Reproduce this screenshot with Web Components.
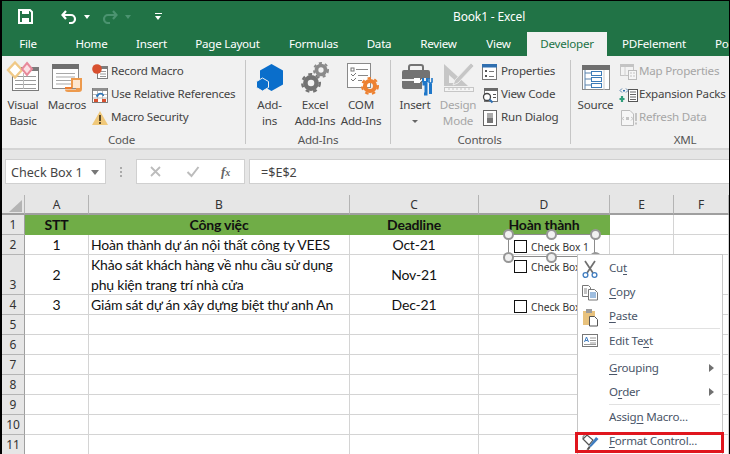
<!DOCTYPE html>
<html lang="vi">
<head>
<meta charset="utf-8">
<title>Book1 - Excel</title>
<style>
html,body{margin:0;padding:0;background:#000}
body{font-family:"Noto Sans","Open Sans",sans-serif}
</style>
</head>
<body>
<x-app>
  <x-titlebar title-text="Book1 - Excel"></x-titlebar>
  <x-tabs></x-tabs>
  <x-ribbon>
    <x-group label="Code" style="width:244px" label-shift="-2">
      <x-big icon="vb" style="width:42px">Visual<br>Basic</x-big>
      <x-big icon="macros" style="width:46px">Macros</x-big>
      <x-col style="margin-left:2px">
        <x-small icon="record">Record Macro</x-small>
        <x-small icon="relative">Use Relative References</x-small>
        <x-small icon="security">Macro Security</x-small>
      </x-col>
    </x-group>
    <x-group label="Add-Ins" style="width:145px">
      <x-big icon="addins" style="width:47px">Add-<br>ins</x-big>
      <x-big icon="exceladd" style="width:44px">Excel<br>Add-Ins</x-big>
      <x-big icon="comadd" style="width:48px">COM<br>Add-Ins</x-big>
    </x-group>
    <x-group label="Controls" style="width:180px" label-shift="-1">
      <x-big icon="insert" style="width:48px">Insert<br><x-caret></x-caret></x-big>
      <x-big icon="design" style="width:38px" disabled>Design<br>Mode</x-big>
      <x-col style="margin-left:5px">
        <x-small icon="properties">Properties</x-small>
        <x-small icon="viewcode">View Code</x-small>
        <x-small icon="rundialog">Run Dialog</x-small>
      </x-col>
    </x-group>
    <x-group label="XML" style="width:158px;border:0" label-shift="35">
      <x-big icon="source" style="width:49px">Source</x-big>
      <x-col>
        <x-small icon="mapprops" disabled>Map Properties</x-small>
        <x-small icon="expansion">Expansion Packs</x-small>
        <x-small icon="refresh" disabled>Refresh Data</x-small>
      </x-col>
    </x-group>
  </x-ribbon>
  <x-formula name="Check Box 1" value="=$E$2"></x-formula>
  <x-sheet></x-sheet>
  <x-objects></x-objects>
  <x-menu></x-menu>
</x-app>

<script>
const gear=(cx,cy,r,c)=>{const t=Math.PI*2*r*0.98/16;return `<circle cx="${cx}" cy="${cy}" r="${r*0.88}" fill="none" stroke="${c}" stroke-width="${r*0.24}" stroke-dasharray="${t} ${t}"/><circle cx="${cx}" cy="${cy}" r="${r*0.56}" fill="none" stroke="${c}" stroke-width="${r*0.46}"/>`};
const lines=(x,y,w,n,step,c)=>{let s='';for(let i=0;i<n;i++)s+=`<rect x="${x}" y="${y+i*step}" width="${w}" height="1" fill="${c}"/>`;return s};
const ICONS={
 vb:`<rect x="9.5" y="5.5" width="26" height="23" fill="#fff" stroke="#7b7b7b"/><rect x="9" y="5" width="27" height="4" fill="#7b7b7b"/>
  ${lines(12,14,21,4,4,'#9a9a9a')}<rect x="20" y="11" width="1" height="16" fill="#bbb"/>
  <path d="M12 .5l7 7.5-7 7.5L5 8z" fill="#fff" stroke="#f0c987" stroke-width="2.4"/><path d="M24 1l5 6-5 6-5-6z" fill="#fbe0e5" stroke="#e8899b" stroke-width="2"/>`,
 macros:`<rect x="5.5" y="2.5" width="26" height="24" fill="#fff" stroke="#8a8a8a"/><rect x="5" y="2" width="27" height="5" fill="#6f6f6f"/>
  ${lines(9,11,19,4,3.5,'#a8a8a8')}<path d="M24 16h11v11q0 3-3 3H21q-3 0-3-2.5h11V26h-5z" fill="#ed9a4d"/><path d="M26 18h7v8h-7z" fill="#fde7cf"/><path d="M18 25h7v2h-7z" fill="#ed7d31"/>`,
 record:`<rect x="5.5" y="2.5" width="10" height="12" fill="#fff" stroke="#7d7d7d"/><rect x="5" y="2" width="11" height="3" fill="#7d7d7d"/>${lines(8,7,6,3,2.5,'#999')}<circle cx="5" cy="5" r="4.8" fill="#d8502f"/>`,
 relative:`<rect x=".5" y="1.5" width="15" height="14" fill="#fff" stroke="#7d7d7d"/><rect x="1" y="1" width="14" height="3" fill="#8f8f8f"/>${lines(1,7,14,2,3.5,'#bbb')}<rect x="5" y="4" width="1" height="11" fill="#bbb"/><rect x="10" y="4" width="1" height="11" fill="#bbb"/><rect x="2" y="12" width="4" height="3" fill="#d8502f"/><rect x="10" y="12" width="4" height="3" fill="#d8502f"/><path d="M5 9.5q1-3 3.5-3t3 2.5" fill="none" stroke="#2f76b9" stroke-width="1.4"/><path d="M3.6 7.6l1.4 3 2.2-2z" fill="#2f76b9"/>`,
 security:`<path d="M8 1l8 14H0z" fill="#f0c879"/><rect x="7" y="5" width="2" height="6" fill="#5b4a2a"/><rect x="7" y="12" width="2" height="2" fill="#5b4a2a"/>`,
 addins:`<path d="M21.5 2L33 8.5v14L21.5 29 10 22.5v-14z" fill="#0a6ecb"/><path d="M12.5 16l6 3.5v6l-6 3.5-6-3.5v-6z" fill="#0a6ecb" stroke="#f1f1f1"/>`,
 exceladd:`${gear(16,21,10,'#737373')}${gear(26,8,8,'#8a8a8a')}`,
 comadd:`<rect x="6.5" y="1.5" width="23" height="24" fill="#fff" stroke="#8a8a8a"/><rect x="10" y="6" width="3" height="3" fill="none" stroke="#777"/><rect x="15" y="7" width="12" height="1" fill="#888"/><path d="M10 12l2 2 3-3M10 17l2 2 3-3" fill="none" stroke="#777"/><rect x="17" y="13" width="10" height="1" fill="#888"/><rect x="17" y="18" width="4" height="1" fill="#888"/>${gear(29,24,9,'#ed8131')}`,
 insert:`<path d="M14 8V5q0-2 2-2h10q2 0 2 2v3" fill="none" stroke="#737373" stroke-width="2"/><path d="M7 10q0-2 2-2h24q2 0 2 2v7H26v1h-7v-1H7z" fill="#737373"/><path d="M7 19h12v1h7v-1h1v8H9q-2 0-2-2z" fill="#737373"/><rect x="19" y="16" width="6" height="5" fill="#fff"/>
  <path d="M29 16v6h2v10h-2" fill="none" stroke="#1f77c9" stroke-width="3"/><path d="M34 16v4l1.5 2 1.5-2v-4" fill="none" stroke="#1f77c9" stroke-width="1.6"/><rect x="34" y="22" width="3" height="10" fill="#1f77c9"/><path d="M27 16v4l3 2 3-2v-4" fill="#1f77c9"/><rect x="29" y="16" width="2" height="3" fill="#f1f1f1"/>`,
 design:`<path d="M6 2L30 24H6z" fill="#c6c6c6"/><path d="M11 13l9 8h-9z" fill="#f1f1f1"/><path d="M33 1l3 3-16 17-5 2 2-5z" fill="#c6c6c6" stroke="#f1f1f1" stroke-width=".8"/><rect x="6.5" y="25.5" width="29" height="4" fill="#f4f4f4" stroke="#c6c6c6"/><path d="M11 26v2M15 26v2M19 26v2M23 26v2M27 26v2M31 26v2" stroke="#c6c6c6"/>`,
 source:`<rect x="6.5" y="3.5" width="27" height="24" fill="#fff" stroke="#8a8a8a"/><rect x="6" y="3" width="28" height="5" fill="#6f6f6f"/><path d="M9 8v19M9 11h6M9 17h6M9 23h6" fill="none" stroke="#5a83ad"/><g fill="#fff" stroke="#3d7cb8"><rect x="15.500" y="9.500" width="10" height="4"/><rect x="15.500" y="15.500" width="10" height="4"/><rect x="15.500" y="21.500" width="10" height="4"/></g><path d="M28 8v20" stroke="#ccc"/>`,
 properties:`<rect x=".5" y=".5" width="14" height="15" fill="#fff" stroke="#777"/><rect x="0" y="0" width="15" height="3.500" fill="#2f6fb0"/><rect x="3" y="6" width="2" height="2" fill="#555"/><rect x="3" y="11" width="2" height="2" fill="#555"/><rect x="7" y="7" width="5" height="1" fill="#777"/><rect x="7" y="12" width="5" height="1" fill="#777"/>`,
 viewcode:`<rect x="2.500" y="1.500" width="13" height="13" fill="#fff" stroke="#777"/><rect x="2" y="1" width="14" height="3" fill="#6a6a6a"/><rect x="11" y="7" width="3" height="1" fill="#555"/><rect x="11" y="10" width="3" height="1" fill="#555"/><circle cx="5" cy="10" r="3.500" fill="#fff" stroke="#444" stroke-width="1.300"/><path d="M7.500 12.500l3 3" stroke="#2f6fb0" stroke-width="2"/>`,
 rundialog:`<rect x="1.500" y=".5" width="13" height="15" fill="#fff" stroke="#666"/><rect x="5" y="3" width="6" height="5" fill="#aaa"/><rect x="5" y="8" width="6" height="5" fill="#777"/>`,
 mapprops:`<rect x=".5" y=".5" width="13" height="11" fill="#f3f3f3" stroke="#c4c4c4"/><rect x="0" y="0" width="14" height="3" fill="#c4c4c4"/><path d="M5 3v9" stroke="#d0d0d0"/><rect x="8.500" y="6.500" width="8" height="9" fill="#f6f6f6" stroke="#bcbcbc"/><path d="M10 9h2M10 12h2M13 9h2M13 12h2" stroke="#c4c4c4"/>`,
 expansion:`<rect x="8.500" y="2.500" width="9" height="12" fill="#fff" stroke="#555"/><path d="M10 5h6M10 7.500h6M10 10h6M10 12.500h6" stroke="#666"/><path d="M2 1.500l-2 2 2 2" fill="none" stroke="#5a83ad"/><path d="M6 1.500l2 2-2 2" fill="none" stroke="#5a83ad"/><rect x="3" y="3" width="2" height="1.500" fill="#2f6fb0"/><path d="M2 9v6M-.5 12h5" stroke="#2f9d7a" stroke-width="2.200"/>`,
 refresh:`<path d="M1.500 .5H10l3.500 3.500v11.500H1.500z" fill="#f6f6f6" stroke="#bcbcbc"/><path d="M4 7l-2 1.500L4 10M11 7l2 1.500-2 2" fill="none" stroke="#c4c4c4"/><rect x="6" y="7" width="3" height="3" fill="#c4c4c4"/><rect x="15" y="3" width="2" height="8" fill="#c4c4c4"/><rect x="15" y="12.500" width="2" height="2" fill="#c4c4c4"/>`,
 cut:`<path d="M3 1l8 12M13 1L5 13" stroke="#6f6f6f" stroke-width="1.700" fill="none"/><circle cx="3.500" cy="15" r="2.400" fill="#fff" stroke="#3f7cbf" stroke-width="1.300"/><circle cx="12.500" cy="15" r="2.400" fill="#fff" stroke="#3f7cbf" stroke-width="1.300"/>`,
 copy:`<path d="M.5 1.500h6l2 2v9H.5z" fill="#fff" stroke="#777"/><path d="M6.500 5.500h6l3 3v7.500h-9z" fill="#fff" stroke="#777"/><path d="M2 5h3M2 7h3M2 9h3" stroke="#888"/><path d="M8 9h6M8 11h6M8 13h6" stroke="#3f7cbf"/>`,
 paste:`<rect x="1" y="3" width="12" height="14" fill="#e8c27d"/><rect x="4" y="1" width="6" height="4" fill="#9b9b9b"/><path d="M7.500 8.500h5l3 3v6.500h-8z" fill="#fff" stroke="#555"/>`,
 edittext:`<rect x=".5" y="1.500" width="15" height="12" fill="#fff" stroke="#777"/><path d="M2.500 9l2-5 2 5M3.200 7.500h2.600" fill="none" stroke="#3f7cbf"/><path d="M8 5h6M8 7.500h6M8 10h6M2 11.500h12" stroke="#999"/>`,
 format:`<path d="M1 6l4-4 6 5-4 5z" fill="#fff" stroke="#555" stroke-width="1.200"/><path d="M3 1.500q-2.500 1.500-2 4" fill="none" stroke="#555"/><path d="M8 12l6-8 2.500 2-7 7.500-2.500 1z" fill="#3f7cbf"/><path d="M4.500 16.500l2.500-3.500 1.500 1.500-2 2.500z" fill="#555"/>`
};
const def=(n,css,html,init)=>customElements.define(n,class extends HTMLElement{
  constructor(){super();this.attachShadow({mode:'open'})}
  connectedCallback(){this.shadowRoot.innerHTML=`<style>${css}</style>${typeof html==='function'?html(this):html}`;init&&init(this)}
});
const svg=(name,w,h)=>`<svg xmlns="http://www.w3.org/2000/svg" width="${w}" height="${h}" viewBox="0 0 ${w} ${h}" style="overflow:visible;display:block;flex:none">${ICONS[name]}</svg>`;
const UI='font-size:11.6px;letter-spacing:-.23px';

def('x-app',`:host{display:block;position:relative;box-sizing:border-box;width:730px;height:454px;overflow:hidden;padding:1px 1px 1px 2px;background:#000;font-family:"Noto Sans","Open Sans",sans-serif}`,`<slot></slot>`);

def('x-titlebar',`:host{display:flex;align-items:center;height:31px;background:#217346;color:#fff;position:relative;font-size:12px;letter-spacing:-.15px}
 .q{display:flex;align-items:center;position:relative;width:200px;height:31px}
 svg{display:block;flex:none}
 .t{flex:none;width:70px;margin-left:251px;text-align:center;white-space:nowrap}
 .d{width:0;height:0;border:3.5px solid transparent;border-top:4px solid #fff;border-bottom:0;flex:none}`,
 h=>`<div class="q">
   <svg style="margin-left:16px" width="15" height="15" viewBox="0 0 15 15"><path d="M1 1h11l2 2v11H1z" fill="none" stroke="#fff" stroke-width="2"/><rect x="4" y="1" width="7" height="4" fill="#fff"/><rect x="4" y="9" width="7" height="5" fill="#fff"/></svg>
   <svg style="margin-left:28px" width="16" height="14" viewBox="0 0 16 14"><path d="M5 1L1.500 5 5 9M2 5h8a3.500 3.500 0 0 1 0 8H8" fill="none" stroke="#fff" stroke-width="2.200"/></svg>
   <span class="d" style="margin-left:7px"></span>
   <svg style="margin-left:12px;transform:scaleX(-1)" width="16" height="14" viewBox="0 0 16 14"><path d="M5 1L1.500 5 5 9M2 5h8a3.500 3.500 0 0 1 0 8H8" fill="none" stroke="#4b9370" stroke-width="2.200"/></svg>
   <span class="d" style="margin-left:7px;border-top-color:#4b9370"></span>
   <span style="margin-left:24px;display:flex;flex-direction:column;gap:2px"><span style="width:7px;height:1px;background:#fff;display:block"></span><span class="d"></span></span>
 </div><div class="t">${h.getAttribute('title-text')}</div>`);

const TABS=[['File',57,'padding-right:5px;box-sizing:border-box'],['Home',65],['Insert',55],['Page Layout',97],['Formulas',75],['Data',56],['Review',63],['View',57],['Developer',80,'',1],['PDFelement',94],['Po',28,'text-align:left;padding-left:14px;box-sizing:border-box;overflow:hidden']];
def('x-tabs',`:host{display:flex;height:24px;background:#217346;color:#fff;${UI};line-height:23px}
 div{text-align:center;flex:none;white-space:nowrap}
 .on{background:#f1f1f1;color:#217346}`,
 ()=>TABS.map(t=>`<div class="${t[3]?'on':''}" style="width:${t[1]}px;${t[2]||''}">${t[0]}</div>`).join(''));

def('x-ribbon',`:host{display:flex;height:84px;padding:4px 0;background:#f1f1f1;border-bottom:2px solid #d4d4d4;color:#444}`,`<slot></slot>`);

def('x-group',`:host{display:flex;flex-direction:column;flex:none;box-sizing:border-box;height:84px;border-right:1px solid #c6c6c6}
 .c{display:flex;flex:1;min-height:0}
 .l{height:16px;line-height:15px;margin-bottom:-4px;${UI};color:#555;text-align:center}`,
 h=>`<div class="c"><slot></slot></div><div class="l" style="transform:translateX(${h.getAttribute('label-shift')||0}px)">${h.getAttribute('label')}</div>`);

def('x-big',`:host{display:flex;flex-direction:column;align-items:center;flex:none;${UI};line-height:16px;text-align:center;color:#444;padding-top:2px;white-space:nowrap}
 :host([disabled]){color:#a6a6a6}
 .i{width:40px;height:35px;flex:none;display:flex;justify-content:center}
 .w{display:flex;justify-content:center;width:100%}`,
 h=>`<div class="w"><div class="i">${svg(h.getAttribute('icon'),40,34)}</div></div><div><slot></slot></div>`);

def('x-caret',`:host{display:inline-block;width:0;height:0;border:3px solid transparent;border-top:3.5px solid #666;border-bottom:0;vertical-align:middle}`,``);

def('x-col',`:host{display:flex;flex-direction:column;flex:none}`,`<slot></slot>`);

def('x-small',`:host{display:flex;align-items:center;height:23px;${UI};color:#444;white-space:nowrap;gap:3px}
 :host([disabled]){color:#a6a6a6}
 .b{width:16px;height:16px;flex:none}
 .x{margin-top:-2px}`,
 h=>`<div class="b">${svg(h.getAttribute('icon'),16,16)}</div><span class="x"><slot></slot></span>`);

def('x-formula',`:host{display:flex;align-items:flex-start;height:45px;padding-top:9px;box-sizing:border-box;background:#e6e6e6;font-size:12.6px;color:#444}
 .box{box-sizing:border-box;height:25px;background:#fff;border:1px solid #d0d0d0;display:flex;align-items:center;flex:none}
 .n{width:101px;margin-left:3px;padding:1px 6px 0 5px;justify-content:space-between}
 .tri{width:0;height:0;border:4px solid transparent;border-top:5px solid #777;border-bottom:0}
 .dots{width:30px;flex:none;display:flex;flex-direction:column;align-items:center;justify-content:center;height:25px;gap:2px}
 .dots i{display:block;width:2px;height:2px;background:#aaa}
 .f{width:109px;padding-left:12px;gap:24px}
 .f em{margin-left:-3px}
 .v{flex:1;margin-left:4px;border-right:0;padding:1px 0 0 11px}
 em{font:italic bold 13px "Liberation Serif",serif;color:#666}
 svg{display:block}`,
 h=>`<div class="box n"><span>${h.getAttribute('name')}</span><span class="tri"></span></div>
 <div class="dots"><i></i><i></i><i></i></div>
 <div class="box f">
  <svg width="13" height="13" viewBox="0 0 13 13"><path d="M2 2l9 9M11 2l-9 9" stroke="#bcbcbc" stroke-width="1.800"/></svg>
  <svg width="14" height="13" viewBox="0 0 14 13"><path d="M1.500 7l4 4 7-9" fill="none" stroke="#bcbcbc" stroke-width="2"/></svg>
  <em>f<span style="font-size:10px">x</span></em>
 </div>
 <div class="box v">${h.getAttribute('value')}</div>`);

const ROWS=[20,20,40,20,20,20,20,20,20,20,20];
const CELLS={
 1:['STT','Công việc','Deadline','Hoàn thành'],
 2:['1','Hoàn thành dự án nội thất công ty VEES','Oct-21',''],
 3:['2','Khảo sát khách hàng về nhu cầu sử dụng<br>phụ kiện trang trí nhà cửa','Nov-21',''],
 4:['3','Giám sát dự án xây dựng biệt thự anh An','Dec-21','']
};
def('x-sheet',`:host{display:grid;grid-template-columns:23px 64px 261px 129px 131px 64px 55px;grid-template-rows:20px 20px 20px 40px 20px 20px 20px 20px 20px 20px 20px 20px;font-family:Lato,"Open Sans",sans-serif;font-size:14px;letter-spacing:-.2px;color:#111;background:#fff;overflow:hidden}
 div{box-sizing:border-box;white-space:nowrap;overflow:hidden}
 .h{background:#e6e6e6;border-right:1px solid #b4b4b4;border-bottom:2px solid #9f9f9f;text-align:center;line-height:20px;color:#333;font-family:"Noto Sans",sans-serif;font-size:12px;letter-spacing:0}
 .corner{position:relative;border-right:1px solid #b4b4b4}
 .corner svg{display:block;margin:5px 0 0 7px}
 .r{background:#e6e6e6;border-right:1px solid #9f9f9f;border-bottom:1px solid #b4b4b4;text-align:center;line-height:18px;display:flex;align-items:flex-end;justify-content:center;color:#333;font-family:"Noto Sans",sans-serif;font-size:12px;letter-spacing:0}
 .c{border-right:1px solid #d4d4d4;border-bottom:1px solid #d4d4d4;line-height:20px}
 .m{display:flex;align-items:center;justify-content:center}
 .b{padding-left:2px}
 .g{background:#70ad47;font-weight:700;border-color:#70ad47;display:flex;align-items:center;justify-content:center;color:#111}`,
 ()=>{
  let s=`<div class="h corner"><svg width="14" height="12" viewBox="0 0 14 12"><path d="M13 0v12H0z" fill="#b4b4b4"/></svg></div>`;
  'ABCDEF'.split('').forEach(c=>s+=`<div class="h">${c}</div>`);
  ROWS.forEach((h,i)=>{const n=i+1;s+=`<div class="r">${n}</div>`;
   for(let j=0;j<6;j++){const t=(CELLS[n]&&CELLS[n][j])||'';
    if(n===1&&j<4)s+=`<div class="c g">${t}</div>`;
    else if(j===1&&CELLS[n])s+=`<div class="c b" style="${n===3?'':'display:flex;align-items:center'}">${t}</div>`;
    else s+=`<div class="c ${t?'m':''}">${t}</div>`}
  });
  return s});

def('x-objects',`:host{display:block;position:absolute;left:0;top:0;width:730px;height:454px;pointer-events:none;font-family:"Noto Sans",sans-serif;font-size:10.2px;color:#333}
 .box{position:absolute;left:514px;width:11px;height:11px;border:1px solid #111;background:#fff}
 .tx{position:absolute;left:531px;line-height:14px;white-space:nowrap}
 .frame{position:absolute;left:508px;top:234px;width:87px;height:23px;border:1px solid #8c8c8c;box-sizing:border-box}
 .dot{position:absolute;box-sizing:border-box;width:11px;height:11px;border-radius:50%;background:#f1f1f1;border:2px solid #979797}`,
 ()=>`<div class="box" style="top:240px"></div><div class="tx" style="top:240px">Check Box 1</div>
 <div class="box" style="top:260px"></div><div class="tx" style="top:260px">Check Box 2</div>
 <div class="box" style="top:300px"></div><div class="tx" style="top:300px">Check Box 3</div>
 <div class="frame"></div>
 ${[[508,234],[551,234],[595,234],[508,257],[551,257],[595,257]].map(p=>`<div class="dot" style="left:${p[0]-5}px;top:${p[1]-5}px"></div>`).join('')}`);

const MENU=[['cut','Cu<u>t</u>'],['copy','<u>C</u>opy'],['paste','<u>P</u>aste'],'s1',['edittext','Edit Te<u>x</u>t'],'s2',['','<u>G</u>rouping',1],['','O<u>r</u>der',1],'s3',['','Assig<u>n</u> Macro...'],['format','<u>F</u>ormat Control...']];
def('x-menu',`:host{display:block;position:absolute;left:577px;top:254px;width:146px;height:204px;box-sizing:border-box;background:#fff;border:1px solid #c6c6c6;padding-top:1px;font-family:"Noto Sans",sans-serif;${UI};color:#4a5568}
 .i{display:flex;align-items:center;height:24px;position:relative}
 .i>span:not(.arr){margin-top:-2px}
 .ic{width:16px;height:16px;margin:0 11px 0 4px;flex:none}
 .sep{height:1px;background:#e1e1e1;margin-left:31px;margin-right:2px}
 .arr{position:absolute;right:8px;width:0;height:0;border:4px solid transparent;border-left:5px solid #707070;border-right:0}
 u{text-underline-offset:2px}
 .red{position:absolute;left:-3px;top:177px;width:149px;height:21px;box-sizing:border-box;border:3px solid #e0161e}`,
 ()=>{
  let s='';
  MENU.forEach(m=>{
   if(m==='s1')s+=`<div class="sep"></div>`;
   else if(m==='s2')s+=`<div class="sep" style="margin-top:1px;margin-bottom:1px"></div>`;
   else if(m==='s3')s+=`<div class="sep"></div>`;
   else s+=`<div class="i"><div class="ic">${m[0]?svg(m[0],16,16):''}</div><span>${m[1]}</span>${m[2]?'<span class="arr"></span>':''}</div>`;
  });
  return s+`<div class="red"></div>`});
</script>
</body>
</html>
